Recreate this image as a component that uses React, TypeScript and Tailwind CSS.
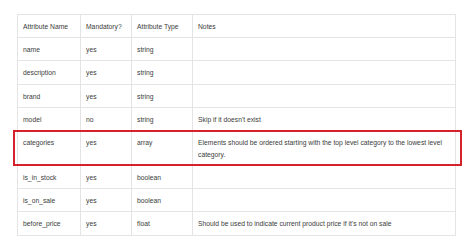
const rows: { name: string; mandatory: string; type: string; notes: string; h: string }[] = [
  { name: "name", mandatory: "yes", type: "string", notes: "", h: "h-[23px]" },
  { name: "description", mandatory: "yes", type: "string", notes: "", h: "h-[24px]" },
  { name: "brand", mandatory: "yes", type: "string", notes: "", h: "h-[23px]" },
  { name: "model", mandatory: "no", type: "string", notes: "Skip if it doesn't exist", h: "h-[23px]" },
  {
    name: "categories",
    mandatory: "yes",
    type: "array",
    notes: "Elements should be ordered starting with the top level category to the lowest level category.",
    h: "h-[35px]",
  },
  { name: "is_in_stock", mandatory: "yes", type: "boolean", notes: "", h: "h-[23px]" },
  { name: "is_on_sale", mandatory: "yes", type: "boolean", notes: "", h: "h-[23px]" },
  {
    name: "before_price",
    mandatory: "yes",
    type: "float",
    notes: "Should be used to indicate current product price if it's not on sale",
    h: "h-[24px]",
  },
];

const cell = "border-r border-b border-[#e4e4e4] pl-[5px] pr-[4px] pt-[6px] leading-[12px]";

function Row({ values, h }: { values: string[]; h: string }) {
  return (
    <div className={`grid grid-cols-[63px_51px_61px_263px] ${h}`}>
      {values.map((v, i) => (
        <div key={i} className={cell}>
          {v}
        </div>
      ))}
    </div>
  );
}

export default function App() {
  return (
    <div className="h-[251px] w-[474px] bg-white pl-[17px] pt-[14px] text-[6.75px] text-[#3c3c3c] [font-family:'Liberation_Sans',Arial,sans-serif]">
      <div className="relative w-[439px] border-t border-l border-[#e4e4e4]">
        <Row values={["Attribute Name", "Mandatory?", "Attribute Type", "Notes"]} h="h-[23px]" />
        {rows.map((r) => (
          <Row key={r.name} values={[r.name, r.mandatory, r.type, r.notes]} h={r.h} />
        ))}
        {/* highlight around the categories row */}
        <div className="absolute left-[-5px] top-[115px] h-[36px] w-[449px] border-2 border-[#d5212b]" />
      </div>
    </div>
  );
}
